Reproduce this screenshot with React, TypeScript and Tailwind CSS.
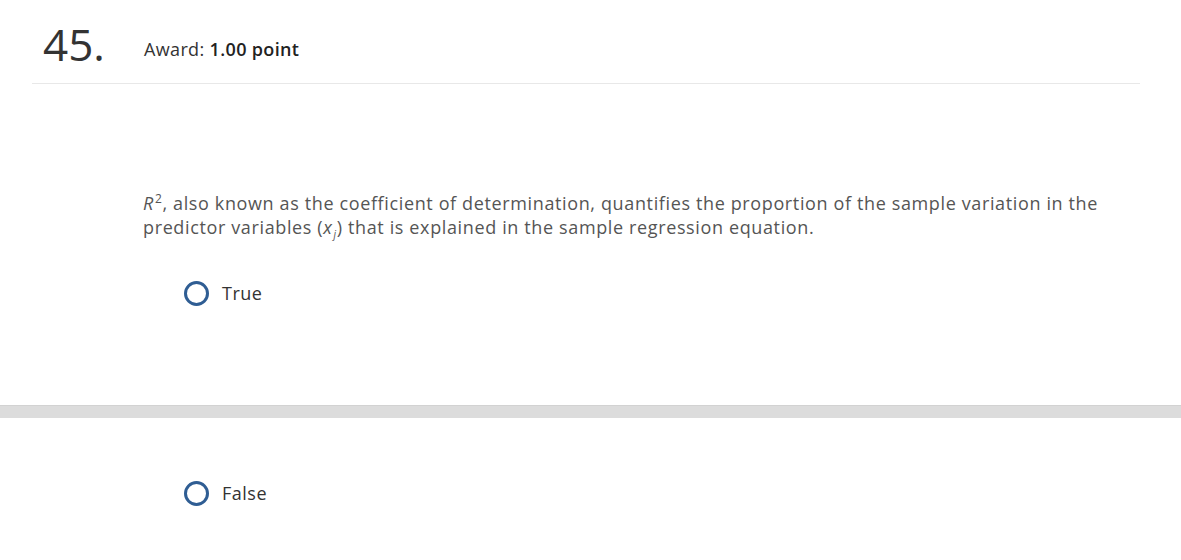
import React from 'react';

function Radio({ label }: { label: string }) {
  return (
    <label className="flex items-center gap-[13px]">
      <span className="block w-[25px] h-[25px] rounded-full border-[3px] border-[#2f5d93] bg-white" />
      <span className="text-[18px] tracking-[0.5px] text-[#333]">{label}</span>
    </label>
  );
}

export default function App() {
  return (
    <div className="w-[1181px] h-[560px] bg-white overflow-hidden font-['Open_Sans',sans-serif]">
      {/* Header */}
      <div className="ml-[32px] mr-[41px] h-[84px] border-b border-[#e8e8e8] flex items-end pb-[17px]">
        <div className="w-[112px] pl-[11px] text-[44px] leading-none text-[#333]">45.</div>
        <div className="text-[18px] tracking-[0.35px] text-[#333] pb-[3px]">
          Award: <span className="font-semibold text-[#222]">1.00 point</span>
        </div>
      </div>

      {/* Question */}
      <div className="pl-[143px] pr-[50px] pt-[107px]">
        <p className="text-[18px] leading-[24px] tracking-[0.63px] text-[#555]">
          <i>R</i><span className="align-[7px] ml-[1px] text-[12px] leading-none">2</span>, also known as the coefficient of determination, quantifies the proportion of the sample variation in the predictor variables (<i>x</i><span className="align-[-4px] ml-[1px] text-[10px] leading-none italic">j</span>) that is explained in the sample regression equation.
        </p>
        <div className="pl-[41px] pt-[41px]">
          <Radio label="True" />
        </div>
      </div>

      <div className="mt-[98px] h-[13px] bg-[#dcdcdc] border-t border-[#d2d2d2]" />

      <div className="pl-[184px] pt-[62px]">
        <Radio label="False" />
      </div>
    </div>
  );
}
